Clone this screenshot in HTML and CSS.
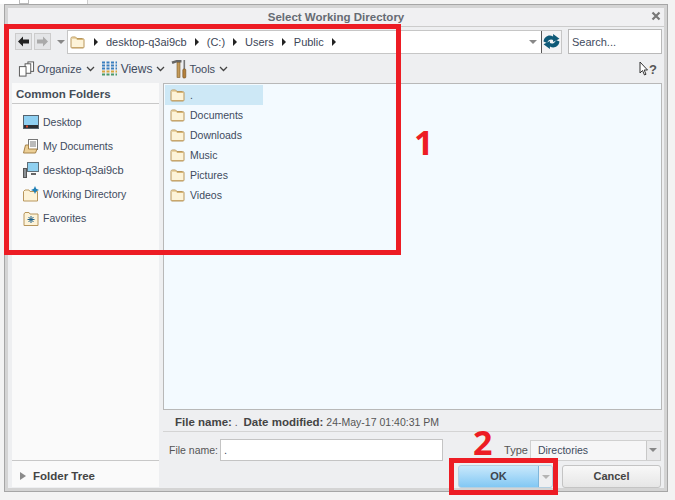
FILE: index.html
```html
<!DOCTYPE html>
<html lang="en">
  <head>
    <meta charset="UTF-8" />
    <title>Select Working Directory</title>
    <link rel="stylesheet" href="styles.css">
  </head>
  <body>
    <svg class="defs" width="0" height="0">
      <symbol id="folder" viewBox="0 0 15 14">
        <path d="M1 12V3.500C1 2.500 1.600 2 2.500 2H5.500L7 3.500H12.500C13.500 3.500 14 4 14 5V12C14 12.800 13.500 13 13 13H2C1.400 13 1 12.800 1 12Z" fill="#fdf3d8" stroke="#b8965c"/>
        <path d="M2 3H6L7 4.500H13.500" fill="none" stroke="#d8b777"/>
        <path d="M2 12.500H13" stroke="#c9a76c"/>
      </symbol>
      <symbol id="caret" viewBox="0 0 9 6">
        <path d="M1 1L4.500 4.500L8 1" fill="none" stroke="#444" stroke-width="1.300"/>
      </symbol>
    </svg>

    <div class="back-strip"><span class="back-box"></span></div>

    <div class="window">
      <div class="title-bar">
        <span class="title">Select Working Directory</span>
        <svg class="close" width="10" height="10" viewBox="0 0 10 10"><path d="M1.500 1.500L8.500 8.500M8.500 1.500L1.500 8.500" stroke="#777" stroke-width="2.200"/></svg>
      </div>

      <div class="nav-row">
        <div class="nav-btn">
          <svg width="13" height="11" viewBox="0 0 13 11"><path d="M6 .5L1 5.500L6 10.500V7.500H12V3.500H6Z" fill="#222"/></svg>
        </div>
        <div class="nav-btn off">
          <svg width="13" height="11" viewBox="0 0 13 11"><path d="M7 .5L12 5.500L7 10.500V7.500H1V3.500H7Z" fill="#aaa"/></svg>
        </div>
        <span class="tri-down nav-drop"></span>
        <div class="path-box">
          <svg class="path-folder" width="15" height="14"><use href="#folder"/></svg>
          <div class="crumbs">
            <span class="tri-right"></span><span class="crumb">desktop-q3ai9cb</span>
            <span class="tri-right"></span><span class="crumb">(C:)</span>
            <span class="tri-right"></span><span class="crumb">Users</span>
            <span class="tri-right"></span><span class="crumb">Public</span>
            <span class="tri-right"></span>
          </div>
          <span class="tri-down path-drop"></span>
          <div class="refresh">
            <svg width="17" height="15" viewBox="0 0 16 14">
              <path d="M.5 7C1 2.500 5.500 0 9.500 2.300V0L15.500 4.500L9.500 7.500V5.500C7.500 4.500 5 5 3.800 8.500Z" fill="#0f5a78"/>
              <path d="M15.500 7C15 11.500 10.500 14 6.500 11.700V14L.5 9.500L6.500 6.500V8.500C8.500 9.500 11 9 12.200 5.500Z" fill="#0f5a78"/>
            </svg>
          </div>
        </div>
        <input class="search" type="text" value="Search...">
      </div>

      <div class="tool-row">
        <div class="tool">
          <svg width="17" height="18" viewBox="0 0 18 18" fill="#fff" stroke="#555">
            <rect x="10.500" y="1.500" width="6" height="10"/>
            <rect x="7.500" y="3.500" width="6" height="10"/>
            <rect x="1.500" y="6.500" width="7" height="10"/>
          </svg>
          Organize
          <svg class="caret" width="9" height="6"><use href="#caret"/></svg>
        </div>
        <div class="tool tool-views">
          <svg class="views-icon" width="15" height="15" viewBox="0 0 15 15">
            <path d="M0 1.500H15M0 4.500H15M0 7.500H15" stroke="#3a7fbf" stroke-dasharray="3 1.500" stroke-width="2"/>
            <path d="M0 10.500H15" stroke="#d8a53c" stroke-dasharray="3 1.500" stroke-width="2"/>
            <path d="M0 13.500H15" stroke="#4a9a6a" stroke-dasharray="3 1.500" stroke-width="2"/>
          </svg>
          Views
          <svg class="caret" width="9" height="6"><use href="#caret"/></svg>
        </div>
        <div class="tool">
          <svg width="17" height="20" viewBox="0 0 16 20">
            <path d="M1 2.500L6 1H11V3.500H6L2 5Z" fill="#666"/>
            <rect x="6.500" y="3.500" width="3" height="15" fill="#c49a5a" stroke="#7a5a2a" stroke-width=".6"/>
            <rect x="13" y="1" width="1.600" height="9" fill="#777"/>
            <rect x="12.300" y="10" width="3" height="9" rx="1" fill="#b5803a" stroke="#6d4a1c" stroke-width=".6"/>
          </svg>
          Tools
          <svg class="caret" width="9" height="6"><use href="#caret"/></svg>
        </div>
        <div class="help">
          <svg width="10" height="15" viewBox="0 0 10 15"><path d="M1 1V12L3.500 9.500L5.500 14L7 13.300L5.200 9H8.500Z" fill="#fff" stroke="#333"/></svg>
          <span class="help-mark">?</span>
        </div>
      </div>

      <div class="panes">
        <div class="sidebar">
          <div class="side-head">Common Folders</div>
          <div class="side-list">
            <div class="side-item">
              <svg width="16" height="14" viewBox="0 0 16 14">
                <rect x=".5" y=".5" width="15" height="13" fill="#8fd0f2" stroke="#55636e"/>
                <rect x="1" y="10" width="14" height="3" fill="#2b2f33"/>
                <rect x="3" y="10.500" width="2" height="2" fill="#d9492f"/>
              </svg>
              Desktop
            </div>
            <div class="side-item">
              <svg width="16" height="15" viewBox="0 0 16 15">
                <rect x="5.500" y=".5" width="9" height="10" fill="#fff" stroke="#777"/>
                <path d="M7 3H13M7 5H13M7 7H13" stroke="#777"/>
                <path d="M.5 14L2.500 6H5.500V10H14L12.500 14Z" fill="#eccf96" stroke="#a6834a"/>
              </svg>
              My Documents
            </div>
            <div class="side-item">
              <svg width="16" height="16" viewBox="0 0 16 16">
                <rect x="4.500" y=".5" width="11" height="9" fill="#8fd0f0" stroke="#5f6f78"/>
                <path d="M8 12H13" stroke="#666" stroke-width="2"/>
                <rect x=".5" y="6.500" width="3" height="9" fill="#8c9296" stroke="#555"/>
              </svg>
              <span class="host-name">desktop-q3ai9cb</span>
            </div>
            <div class="side-item">
              <svg width="16" height="16" viewBox="0 0 16 16">
                <path d="M.5 15V5.500L2 4H6L7 5.500H14.500V15Z" fill="#fdf3d8" stroke="#b8965c"/>
                <path d="M12 0L13.200 2.800L16 4L13.200 5.200L12 8L10.800 5.200L8 4L10.800 2.800Z" fill="#1f7fb5"/>
              </svg>
              Working Directory
            </div>
            <div class="side-item">
              <svg width="16" height="15" viewBox="0 0 16 15">
                <path d="M1 14.500V3L2 1.500H6L7 3H15V14.500Z" fill="#fdf3d8" stroke="#b8965c"/>
                <path d="M8 5V12M4.500 8.500H11.500M5.500 6L10.500 11M10.500 6L5.500 11" stroke="#1c5f8a"/>
              </svg>
              Favorites
            </div>
          </div>
          <div class="side-foot"><span class="tri-right foot-tri"></span>Folder Tree</div>
        </div>

        <div class="main">
          <div class="file-list">
            <div class="file selected"><svg width="15" height="14"><use href="#folder"/></svg>.</div>
            <div class="file"><svg width="15" height="14"><use href="#folder"/></svg>Documents</div>
            <div class="file"><svg width="15" height="14"><use href="#folder"/></svg>Downloads</div>
            <div class="file"><svg width="15" height="14"><use href="#folder"/></svg>Music</div>
            <div class="file"><svg width="15" height="14"><use href="#folder"/></svg>Pictures</div>
            <div class="file"><svg width="15" height="14"><use href="#folder"/></svg>Videos</div>
          </div>
          <div class="status"><b>File name:</b> . &nbsp;<b>Date modified:</b> 24-May-17 01:40:31 PM</div>
          <div class="name-row">
            <label class="field-label">File name:</label>
            <input class="name-input" type="text" value=".">
            <label class="field-label type-label">Type</label>
            <div class="type-select">
              <span class="type-value">Directories</span>
              <span class="type-arrow"><span class="tri-down"></span></span>
            </div>
          </div>
          <div class="button-row">
            <div class="ok-btn">
              <span class="ok-label">OK</span>
              <span class="ok-drop"><span class="tri-down"></span></span>
            </div>
            <div class="cancel-btn">Cancel</div>
          </div>
        </div>
      </div>
    </div>

    <!-- red annotations drawn on top of the dialog -->
    <div class="mark mark-one"></div>
    <div class="mark mark-two"></div>
    <span class="mark-num num-one">1</span>
    <span class="mark-num num-two">2</span>
  </body>
</html>
```

FILE: styles.css
```css
* {
  box-sizing: border-box;
}
html,
body {
  height: 100%;
}
body {
  margin: 0;
  background: #f3f3f3;
  font-family: "Liberation Sans", Arial, sans-serif;
  font-size: 11px;
  color: #414b5e;
  overflow: hidden;
  position: relative;
}
svg {
  flex: none;
  display: block;
}
.defs {
  position: absolute;
}
.back-strip {
  height: 4px;
  width: 88px;
  background: #fff;
  border-right: 1px solid #ccc;
  padding-left: 19px;
}
.back-box {
  display: block;
  width: 10px;
  height: 4px;
  border: 1px solid #bbb;
  border-top: 0;
}
.window {
  width: 664px;
  height: 488px;
  margin-left: 4px;
  border: 1px solid #a6a6a6;
  border-bottom-width: 2px;
  outline: 3px solid #d4d4d4;
  outline-offset: -4px;
  background: #eeeff1;
  padding: 3px 5px 0 7px;
  display: flex;
  flex-direction: column;
}
.title-bar {
  height: 19px;
  flex: none;
  margin: 0 -2px 0 -4px;
  border-bottom: 1px solid #ccc;
  display: flex;
  align-items: center;
  justify-content: center;
  position: relative;
  background: #f0f0f2;
}
.title {
  font-weight: bold;
  font-size: 11.500px;
  color: #666b73;
}
.close {
  position: absolute;
  right: 3px;
  top: 3px;
}

.nav-row {
  height: 27px;
  flex: none;
  padding: 2px 0 0 3px;
  display: flex;
  align-items: center;
}
.nav-btn {
  width: 17px;
  height: 17px;
  margin-right: 2px;
  border: 1px solid #ccc;
  background: #e4e5e7;
  display: flex;
  align-items: center;
  justify-content: center;
}
.tri-down {
  display: inline-block;
  width: 0;
  height: 0;
  border: 4px solid transparent;
  border-top: 4px solid #888;
  border-bottom: 0;
}
.tri-right {
  display: inline-block;
  width: 0;
  height: 0;
  border: 4px solid transparent;
  border-left: 4px solid #222;
  border-right: 0;
}
.nav-drop {
  margin: 0 2px 0 4px;
}
.path-box {
  width: 495px;
  height: 24px;
  background: #fff;
  border: 1px solid #c6c6c6;
  display: flex;
  align-items: center;
}
.path-folder {
  margin-left: 2px;
}
.crumbs {
  flex: 1;
  display: flex;
  align-items: center;
  color: #3c4657;
  padding-left: 9px;
}
.crumb {
  margin: 0 8px;
}
.path-drop {
  margin-right: 4px;
}
.refresh {
  width: 20px;
  height: 22px;
  border-left: 1px solid #555;
  background: #f4f4f5;
  display: flex;
  align-items: center;
  justify-content: center;
}
.search {
  width: 94px;
  height: 25px;
  margin-left: 6px;
  border: 1px solid #b9b9b9;
  padding: 0 3px;
  font: 11px "Liberation Sans", Arial, sans-serif;
  color: #414b5e;
  background: #fff;
}

.tool-row {
  height: 29px;
  flex: none;
  padding-left: 6px;
  display: flex;
  align-items: center;
  gap: 7px;
}
.tool {
  display: flex;
  align-items: center;
  gap: 2px;
}
.tool-views {
  font-size: 12px;
  margin-right: -2px;
}
.caret {
  margin-left: 2px;
}
.views-icon {
  margin-right: 2px;
}
.help {
  margin-left: auto;
  margin-right: 5px;
  display: flex;
  align-items: flex-end;
}
.help-mark {
  font-size: 13px;
  font-weight: bold;
  color: #555;
  line-height: 13px;
}

.panes {
  flex: 1;
  min-height: 0;
  display: flex;
  gap: 4px;
  padding-bottom: 3px;
}
.sidebar {
  width: 147px;
  background: #fafafa;
  display: flex;
  flex-direction: column;
}
.side-head {
  height: 21px;
  padding-left: 4px;
  line-height: 22px;
  font-weight: bold;
  font-size: 11.500px;
  color: #444c57;
  border-bottom: 1px solid #c8c8c8;
}
.side-list {
  flex: 1;
  padding: 6px 0 0 11px;
}
.side-item {
  height: 24px;
  display: flex;
  align-items: center;
  gap: 4px;
  font-size: 10.500px;
}
.host-name {
  font-size: 11px;
}
.side-foot {
  height: 27px;
  border-top: 1px solid #c8c8c8;
  display: flex;
  align-items: center;
  padding: 4px 0 0 8px;
  font-weight: bold;
  font-size: 11.500px;
  color: #444;
}
.foot-tri {
  border-width: 4.500px;
  border-left: 6px solid #8a8a8a;
  margin-right: 7px;
}

.main {
  flex: 1;
  display: flex;
  flex-direction: column;
}
.file-list {
  height: 327px;
  flex: none;
  background: #f3faff;
  border: 1px solid #b8b8b8;
  padding: 1px 0 0 1px;
}
.file {
  width: 98px;
  height: 20px;
  display: flex;
  align-items: center;
  gap: 5px;
  padding-left: 5px;
  white-space: nowrap;
  font-size: 10.500px;
}
.selected {
  background: #cde8f6;
}
.status {
  height: 22px;
  flex: none;
  padding: 5px 0 0 12px;
  border-bottom: 1px solid #d4d4d4;
  font-size: 10.500px;
  color: #555;
  line-height: 14px;
}
.status b {
  font-size: 11.500px;
  color: #444;
}
.name-row {
  display: flex;
  align-items: center;
  height: 22px;
  margin-top: 7px;
  flex: none;
}
.field-label {
  margin-left: 6px;
  font-size: 10.500px;
  color: #555;
}
.name-input {
  width: 223px;
  height: 22px;
  margin-left: 2px;
  border: 1px solid #c4c4c4;
  background: #fff;
  padding: 0 3px;
  font: 11px "Liberation Sans", Arial, sans-serif;
  color: #414b5e;
}
.type-label {
  margin-left: 61px;
  font-size: 11px;
}
.type-select {
  width: 131px;
  height: 21px;
  margin-left: 2px;
  border: 1px solid #d0d0d0;
  background: #f6f6f7;
  display: flex;
  align-items: center;
}
.type-value {
  flex: 1;
  padding-left: 7px;
  font-size: 10.500px;
}
.type-arrow {
  width: 14px;
  height: 19px;
  background: #e9e9ea;
  border-left: 1px solid #c8c8c8;
  display: flex;
  align-items: center;
  justify-content: center;
}
.button-row {
  margin-top: 4px;
  height: 23px;
  display: flex;
  justify-content: flex-end;
  gap: 9px;
  padding-right: 1px;
}
.ok-btn {
  width: 95px;
  display: flex;
  border: 1px solid #b5cfe0;
  border-radius: 3px;
  background: linear-gradient(#c9e8fb, #82c8f4);
  overflow: hidden;
}
.ok-label {
  flex: 1;
  text-align: center;
  line-height: 21px;
  font-weight: bold;
  color: #3d4550;
}
.ok-drop {
  width: 14px;
  background: #eeeff1;
  border-left: 1px solid #7fb6da;
  display: flex;
  align-items: center;
  justify-content: center;
}
.ok-drop .tri-down {
  border-top-color: #b4b4b4;
}
.cancel-btn {
  width: 99px;
  border: 1px solid #c4c4c4;
  border-radius: 3px;
  background: linear-gradient(#f8f8f8, #e6e6e6);
  text-align: center;
  line-height: 21px;
  font-weight: bold;
  color: #444;
}

.mark {
  position: absolute;
  border: 5px solid #ed1c24;
}
.mark-one {
  left: 4px;
  top: 24px;
  width: 397px;
  height: 231px;
}
.mark-two {
  left: 449px;
  top: 458px;
  width: 109px;
  height: 37px;
}
.mark-num {
  position: absolute;
  font-family: "Open Sans", sans-serif;
  font-weight: bold;
  font-size: 34px;
  line-height: 34px;
  color: #ed1c24;
}
.num-one {
  left: 414px;
  top: 125px;
}
.num-two {
  left: 473px;
  top: 425px;
}
```
